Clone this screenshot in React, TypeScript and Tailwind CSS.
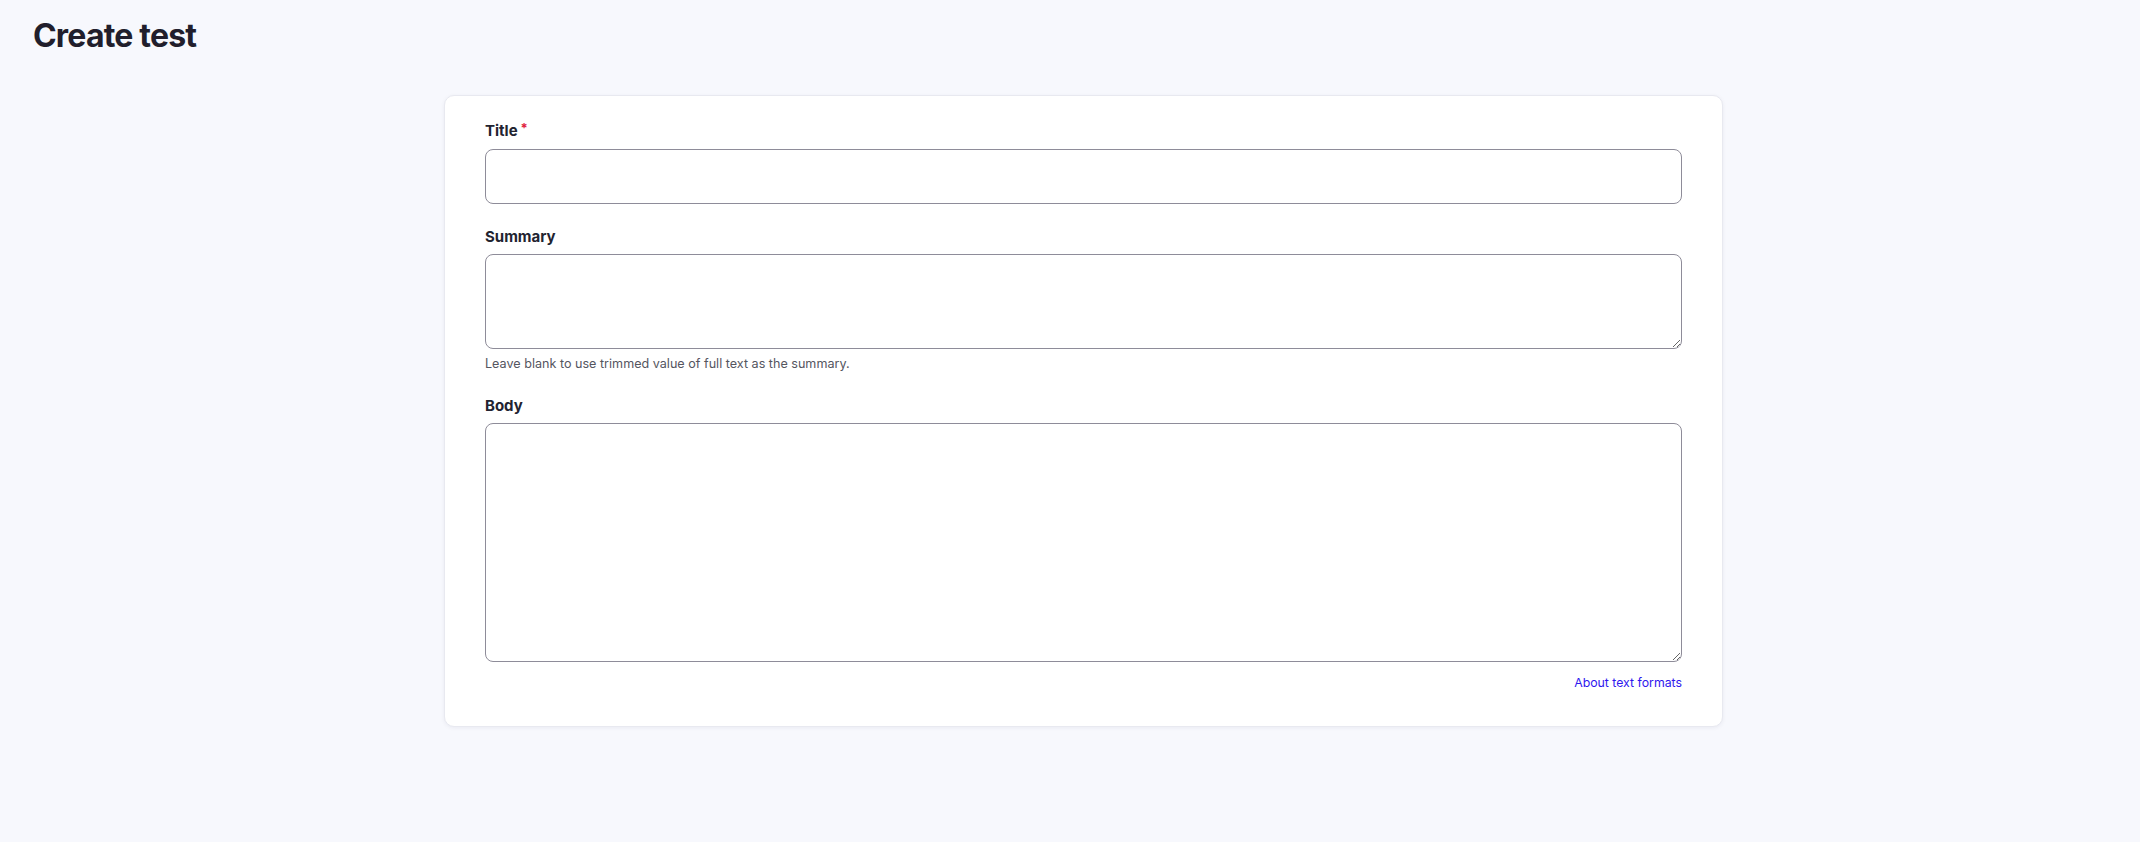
import React from "react";

export default function App() {
  return (
    <div className="min-h-[842px] w-full bg-[#f7f8fd] font-['Inter',_'Noto_Sans',_sans-serif] text-[#222330]">
      <header className="pl-[33px] pt-[17px]">
        <h1 className="text-[32px] leading-[38px] font-bold tracking-[-0.025em] text-[#211e2c]">Create test</h1>
      </header>
      <main className="ml-[444px] mt-[40px] w-[1279px] rounded-[10px] border border-[#e8e9f0] bg-white px-[40px] pt-[25px] pb-[35px] shadow-[0_1px_4px_rgba(20,20,60,0.06)]">
        <div>
          <label className="flex items-start text-[15px] leading-[20px] font-bold text-[#222330]">
            Title
            <span className="ml-[3px] mt-[1px] text-[13px] leading-[12px] font-bold text-[#e0223e]">*</span>
          </label>
          <input
            type="text"
            className="mt-[8px] block h-[55px] w-full rounded-[8px] border border-[#8e8c99] bg-white px-3 outline-none"
          />
        </div>
        <div className="mt-[23px]">
          <label className="block text-[15px] leading-[20px] font-bold text-[#222330]">Summary</label>
          <textarea className="mt-[7px] block h-[95px] w-full rounded-[8px] border border-[#8e8c99] bg-white px-3 py-2 outline-none" />
          <p className="mt-[7px] text-[12.6px] leading-[16px] text-[#55565f]">
            Leave blank to use trimmed value of full text as the summary.
          </p>
        </div>
        <div className="mt-[24px]">
          <label className="block text-[15px] leading-[20px] font-bold text-[#222330]">Body</label>
          <textarea className="mt-[7px] block h-[239px] w-full rounded-[8px] border border-[#8e8c99] bg-white px-3 py-2 outline-none" />
          <div className="mt-[13px] flex justify-end">
            <a href="#" className="text-[12.3px] leading-[16px] text-[#2f17ee]">About text formats</a>
          </div>
        </div>
      </main>
    </div>
  );
}
